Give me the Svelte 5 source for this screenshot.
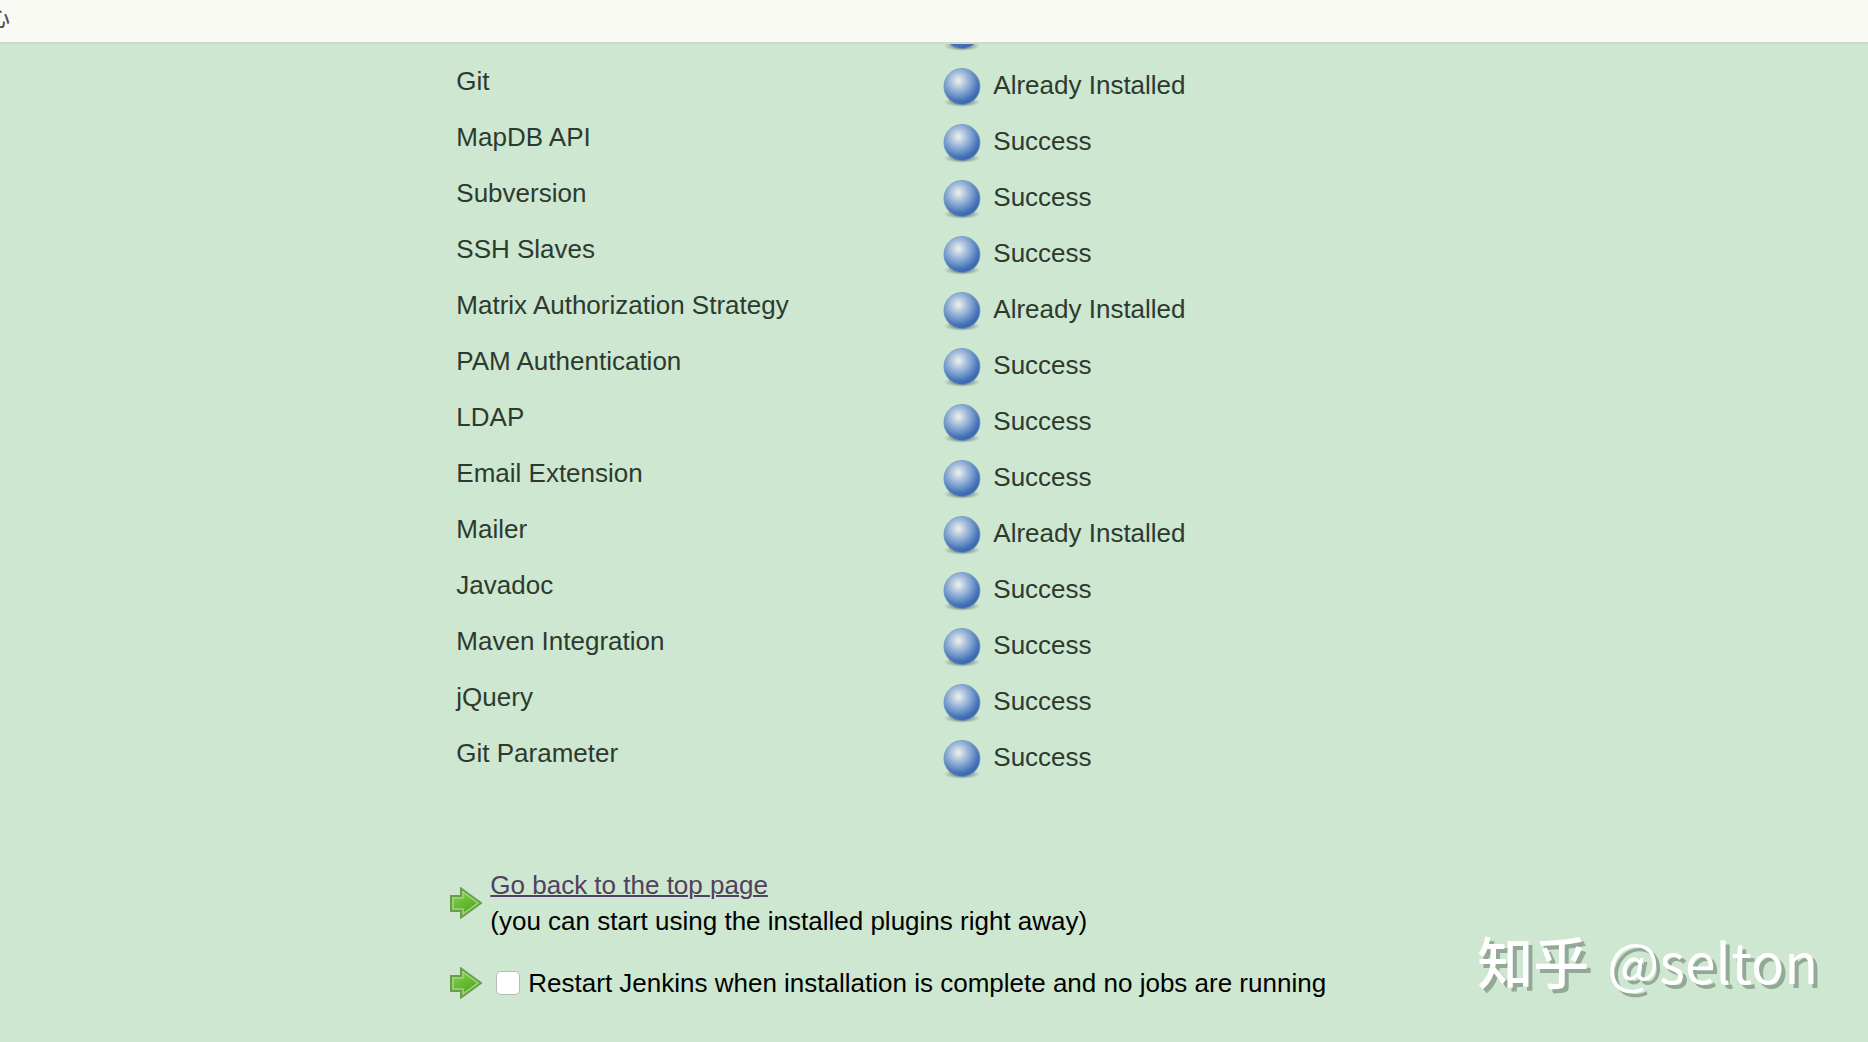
<script>
  const plugins = [
    { name: '', status: '' },
    { name: 'Git', status: 'Already Installed' },
    { name: 'MapDB API', status: 'Success' },
    { name: 'Subversion', status: 'Success' },
    { name: 'SSH Slaves', status: 'Success' },
    { name: 'Matrix Authorization Strategy', status: 'Already Installed' },
    { name: 'PAM Authentication', status: 'Success' },
    { name: 'LDAP', status: 'Success' },
    { name: 'Email Extension', status: 'Success' },
    { name: 'Mailer', status: 'Already Installed' },
    { name: 'Javadoc', status: 'Success' },
    { name: 'Maven Integration', status: 'Success' },
    { name: 'jQuery', status: 'Success' },
    { name: 'Git Parameter', status: 'Success' }
  ];

  let restart = $state(false);
</script>

{#snippet arrow()}
  <svg class="arrow" viewBox="0 0 32 32" aria-hidden="true">
    <path d="M1 9H11V1.5L31 16L11 30.5V24H1Z" fill="url(#arrow-fill)" stroke="#6b9a50" stroke-width="2" />
    <path d="M3 11H13V5L28 16L13 27V22H3Z" fill="none" stroke="#9fd67c" stroke-width="1.5" />
  </svg>
{/snippet}

<!-- gradients shared by all the icons -->
<svg class="defs" width="0" height="0" aria-hidden="true">
  <defs>
    <radialGradient id="ball-fill" cx="0.4" cy="0.34" r="0.7">
      <stop offset="0" stop-color="#f0f1e8" />
      <stop offset="0.18" stop-color="#c9d6e4" />
      <stop offset="0.5" stop-color="#83a5d2" />
      <stop offset="0.8" stop-color="#4673b6" />
      <stop offset="1" stop-color="#3562a8" />
    </radialGradient>
    <linearGradient id="ball-rim" x1="0" y1="0" x2="0" y2="1">
      <stop offset="0" stop-color="#7ba5c6" />
      <stop offset="1" stop-color="#6c90bd" />
    </linearGradient>
    <radialGradient id="ball-shadow">
      <stop offset="0.3" stop-color="#4d6660" stop-opacity="0.7" />
      <stop offset="1" stop-color="#4d6660" stop-opacity="0" />
    </radialGradient>
    <linearGradient id="arrow-fill" x1="0" y1="0" x2="0.5" y2="1">
      <stop offset="0" stop-color="#a2d977" />
      <stop offset="0.5" stop-color="#6cbf36" />
      <stop offset="1" stop-color="#4ea41e" />
    </linearGradient>
  </defs>
</svg>

<div class="page">
  <header class="topbar"><span>心</span></header>

  <main>
    <div class="content">
      <table>
        <tbody>
          {#each plugins as plugin}
            <tr>
              <td class="name">{plugin.name}</td>
              <td>
                <div class="status">
                  <svg class="ball" viewBox="0 0 40 40" aria-hidden="true">
                    <ellipse cx="20" cy="35" rx="18" ry="5" fill="url(#ball-shadow)" />
                    <circle cx="20" cy="19.5" r="18" fill="url(#ball-fill)" stroke="url(#ball-rim)" />
                  </svg>
                  <span>{plugin.status}</span>
                </div>
              </td>
            </tr>
          {/each}
        </tbody>
      </table>

      <div class="action">
        {@render arrow()}
        <div class="back">
          <a href="/">Go back to the top page</a>
          <div>(you can start using the installed plugins right away)</div>
        </div>
      </div>

      <div class="action">
        {@render arrow()}
        <input type="checkbox" id="restart" bind:checked={restart} />
        <label for="restart">Restart Jenkins when installation is complete and no jobs are running</label>
      </div>
    </div>
  </main>

  <div class="watermark">
    <span>知乎</span>
    <span class="author">@selton</span>
  </div>
</div>

<style>
  :global(body) {
    background: #cee7d0;
  }

  .defs {
    position: absolute;
  }

  .page {
    min-height: 100vh;
    overflow: hidden;
    background: #cee7d0;
    color: #000;
    font-family: 'Liberation Sans', Arial, Helvetica, sans-serif;
    font-size: 26px;
    line-height: 36px;
  }

  .topbar {
    display: flex;
    align-items: center;
    height: 42px;
    overflow: hidden;
    background: #f8faf3;
    border-bottom: 2px solid #cfd9cc;
    color: #4a4d48;
    font-family: 'Noto Sans CJK SC', sans-serif;
    font-size: 24px;
  }

  .topbar span {
    margin: -10px 0 0 -14px;
  }

  main {
    overflow: hidden;
  }

  .content {
    margin-left: 24%;
  }

  /* the list is scrolled part of the way under the top bar */
  table {
    width: 900px;
    max-width: 100%;
    margin-top: -41px;
    margin-bottom: 80px;
    border-collapse: collapse;
    table-layout: fixed;
    color: #2d3a2f;
  }

  td {
    height: 56px;
    padding: 0;
    vertical-align: middle;
  }

  .name {
    box-sizing: border-box;
    width: 494px;
    padding-left: 8px;
    padding-bottom: 12px;
  }

  .status {
    display: flex;
    align-items: center;
    gap: 11px;
  }

  .status span {
    padding-bottom: 4px;
  }

  .ball {
    width: 40px;
    height: 40px;
  }

  .action {
    display: flex;
    align-items: center;
    margin-bottom: 26px;
  }

  .arrow {
    flex: none;
    width: 32px;
    height: 32px;
    margin: 0 8px 0 2px;
  }

  a {
    color: #52405f;
    text-decoration: underline;
    text-decoration-thickness: 2px;
  }

  input {
    appearance: none;
    width: 24px;
    height: 24px;
    margin: 0 8px 0 6px;
    background: #fff;
    border: 1px solid #b4bdb4;
    border-radius: 5px;
  }

  input:checked {
    background: #3b7fe0;
  }

  .watermark {
    position: absolute;
    right: 50px;
    bottom: 46px;
    display: flex;
    align-items: baseline;
    gap: 18px;
    color: #fff;
    font-family: 'Noto Sans CJK SC', sans-serif;
    font-size: 56px;
    font-weight: 500;
    line-height: 72px;
    text-shadow: 4px 4px 0 #94a896;
  }

  .author {
    font-size: 55px;
    font-weight: 400;
  }
</style>
